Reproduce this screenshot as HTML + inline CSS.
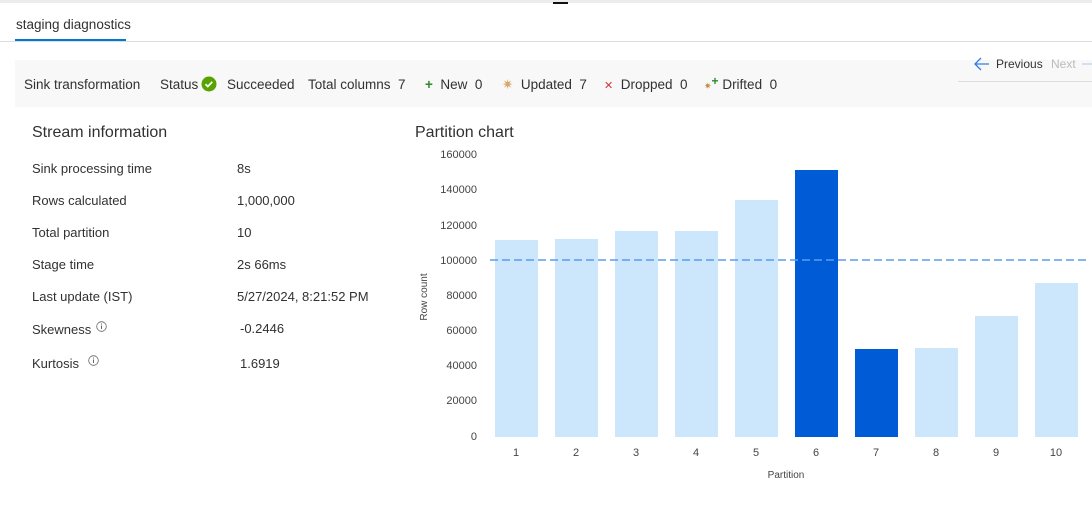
<!DOCTYPE html>
<html><head><meta charset="utf-8"><style>
*{margin:0;padding:0;box-sizing:border-box}
body{width:1092px;height:506px;background:#fff;font-family:"Liberation Sans",sans-serif;color:#323130;position:relative;overflow:hidden}
.a{position:absolute;white-space:nowrap}
.f13{font-size:13px}
.s{font-size:13.5px;top:77px}
</style></head><body>
<div class="a" style="left:0;top:0;width:1092px;height:3px;background:#ececec"></div>
<div class="a" style="top:2px;left:553px;width:15px;height:2px;background:#111"></div>
<div class="a f13" style="left:16px;top:17px;font-size:13.5px">staging diagnostics</div>
<div class="a" style="left:15px;top:39px;width:111px;height:2px;background:#0078d4"></div>
<div class="a" style="left:0;top:41px;width:1092px;height:1px;background:#ddd"></div>
<div class="a" style="left:15px;top:60px;width:1077px;height:47px;background:#f8f8f8"></div>
<div class="a s" style="left:24px">Sink transformation</div>
<div class="a s" style="left:160px">Status</div>
<svg class="a" style="left:201px;top:76px" width="16" height="16"><circle cx="8" cy="8" r="7.5" fill="#57a300"/><path d="M4.5 8.2l2.3 2.3 4.5-4.6" stroke="#fff" stroke-width="1.8" fill="none"/></svg>
<div class="a s" style="left:227px">Succeeded</div>
<div class="a s" style="left:308px">Total columns&nbsp; 7</div>
<div class="a s" style="left:425px"><span style="color:#2c8a2c;font-weight:bold">+</span>&nbsp; New&nbsp; 0</div>
<div class="a s" style="left:502px"><span style="color:#d9a66b">✷</span>&nbsp; Updated&nbsp; 7</div>
<div class="a s" style="left:604px"><span style="color:#d13438;font-size:11px">✕</span>&nbsp; Dropped&nbsp; 0</div>
<div class="a s" style="left:704px"><span style="color:#c48a3d;font-size:9px">✷</span><span style="color:#2c8a2c;font-weight:bold;position:relative;top:-4px;font-size:12px">+</span> Drifted&nbsp; 0</div>
<svg class="a" style="left:973px;top:56px" width="18" height="16"><path d="M16 8H2M8 2L2 8l6 6" stroke="#2b7de9" stroke-width="1.3" fill="none"/></svg>
<div class="a" style="left:996px;top:57px;font-size:12px;color:#333">Previous</div>
<div class="a" style="left:1051px;top:57px;font-size:12px;color:#bbb">Next</div>
<svg class="a" style="left:1082px;top:56px" width="12" height="16"><path d="M0 8h10" stroke="#bcd4f0" stroke-width="1.3"/></svg>
<div class="a" style="left:958px;top:81px;width:134px;height:1px;background:#ddd"></div>

<div class="a" style="left:32px;top:124px;font-size:16px">Stream information</div>
<div class="a f13" style="left:32px;top:161px">Sink processing time</div><div class="a f13" style="left:237px;top:161px">8s</div>
<div class="a f13" style="left:32px;top:193px">Rows calculated</div><div class="a f13" style="left:237px;top:193px">1,000,000</div>
<div class="a f13" style="left:32px;top:225px">Total partition</div><div class="a f13" style="left:237px;top:225px">10</div>
<div class="a f13" style="left:32px;top:257px">Stage time</div><div class="a f13" style="left:237px;top:257px">2s 66ms</div>
<div class="a f13" style="left:32px;top:289px">Last update (IST)</div><div class="a f13" style="left:237px;top:289px">5/27/2024, 8:21:52 PM</div>
<div class="a f13" style="left:32px;top:322px">Skewness</div><div class="a f13" style="left:240px;top:321px">-0.2446</div>
<svg class="a" style="left:96px;top:321px" width="11" height="11"><circle cx="5.5" cy="5.5" r="4.8" stroke="#666" fill="none" stroke-width=".8"/><path d="M5.5 4.5v3.5" stroke="#666"/><circle cx="5.5" cy="3" r=".6" fill="#666"/></svg>
<div class="a f13" style="left:32px;top:356px">Kurtosis</div><div class="a f13" style="left:240px;top:356px">1.6919</div>
<svg class="a" style="left:88px;top:355px" width="11" height="11"><circle cx="5.5" cy="5.5" r="4.8" stroke="#666" fill="none" stroke-width=".8"/><path d="M5.5 4.5v3.5" stroke="#666"/><circle cx="5.5" cy="3" r=".6" fill="#666"/></svg>

<div class="a" style="left:415px;top:124px;font-size:16px">Partition chart</div>
<svg class="a" style="left:0;top:0" width="1092" height="506" font-family="Liberation Sans, sans-serif" font-size="11" fill="#444">
<g text-anchor="end">
<text x="477" y="158">160000</text><text x="477" y="193">140000</text><text x="477" y="229">120000</text><text x="477" y="264">100000</text><text x="477" y="299">80000</text><text x="477" y="334">60000</text><text x="477" y="369">40000</text><text x="477" y="404">20000</text><text x="477" y="440">0</text>
</g>
<text transform="translate(427,297) rotate(-90)" text-anchor="middle" font-size="10">Row count</text>
<g fill="#cce6fc">
<rect x="495" y="240" width="43" height="197"/><rect x="555" y="239" width="43" height="198"/><rect x="615" y="231" width="43" height="206"/><rect x="675" y="231" width="43" height="206"/><rect x="735" y="200" width="43" height="237"/><rect x="915" y="348" width="43" height="89"/><rect x="975" y="316" width="43" height="121"/><rect x="1035" y="283" width="43" height="154"/>
</g>
<g fill="#005bd6"><rect x="795" y="170" width="43" height="267"/><rect x="855" y="349" width="43" height="88"/></g>
<line x1="490" y1="260" x2="1086" y2="260" stroke="#5b9cf0" stroke-width="1.5" stroke-dasharray="8,4"/>
<g text-anchor="middle">
<text x="516" y="456">1</text><text x="576" y="456">2</text><text x="636" y="456">3</text><text x="696" y="456">4</text><text x="756" y="456">5</text><text x="816" y="456">6</text><text x="876" y="456">7</text><text x="936" y="456">8</text><text x="996" y="456">9</text><text x="1056" y="456">10</text>
<text x="786" y="478" font-size="10">Partition</text>
</g>
</svg>
</body></html>
